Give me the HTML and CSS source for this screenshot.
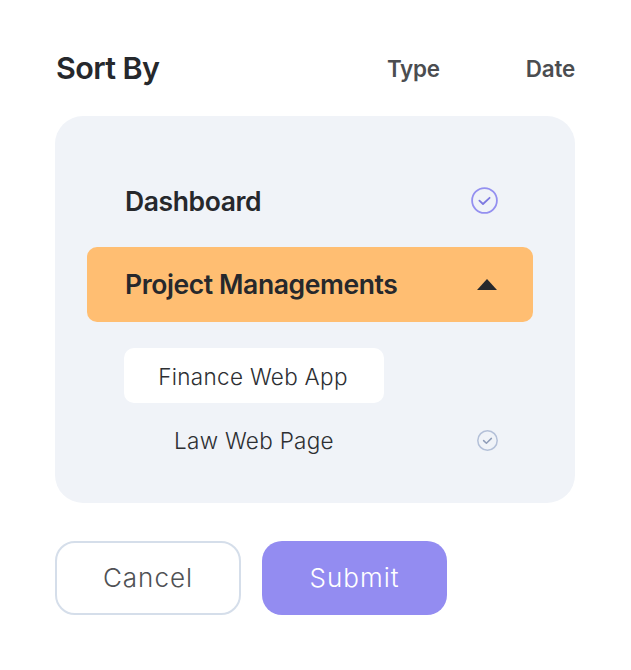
FILE: index.html
```html
<!DOCTYPE html>
<html lang="en">
<head>
    <meta charset="UTF-8">
    <meta name="viewport" content="width=device-width, initial-scale=1.0">
    <link rel="stylesheet" href="styles.css">
    <title>Sort By</title>
</head>
<body>
<div class="sort-card">
    <div class="sort-head">
        <h1 class="sort-title">Sort By</h1>
        <span class="sort-tab sort-tab_type">Type</span>
        <span class="sort-tab">Date</span>
    </div>

    <div class="panel">
        <div class="row row_first">
            <span class="row-label">Dashboard</span>
            <svg class="check" width="27" height="27" viewBox="0 0 27 27" fill="none">
                <circle cx="13.5" cy="13.5" r="12.4" stroke="#9490f0" stroke-width="1.8"/>
                <path d="M8.4 13.6l3.6 3.4 6.6-6.2" stroke="#7d79e0" stroke-width="1.8" stroke-linecap="round" stroke-linejoin="round"/>
            </svg>
        </div>

        <div class="row row_active">
            <span class="row-label">Project Managements</span>
            <span class="arrow-up"></span>
        </div>

        <div class="sub-item sub-item_selected">Finance Web App</div>

        <div class="sub-row">
            <span class="sub-item">Law Web Page</span>
            <svg class="check" width="21" height="21" viewBox="0 0 21 21" fill="none">
                <circle cx="10.5" cy="10.5" r="9.7" stroke="#b4c0d8" stroke-width="1.5"/>
                <path d="M6.6 10.6l2.8 2.6 5-4.8" stroke="#8f9db8" stroke-width="1.5" stroke-linecap="round" stroke-linejoin="round"/>
            </svg>
        </div>
    </div>

    <div class="actions">
        <button class="btn btn_cancel">Cancel</button>
        <button class="btn btn_submit">Submit</button>
    </div>
</div>
</body>
</html>
```

FILE: styles.css
```css
body, html {
    margin: 0;
    padding: 0;
    background-color: #fff;
}

body {
    font-family: "Inter", "Liberation Sans", sans-serif;
    color: #26282c;
}

.sort-card {
    width: 520px;
    padding: 48px 0 0 55px;
}

.sort-head {
    display: flex;
    align-items: center;
    height: 40px;
}

.sort-title {
    margin: 0 0 0 1px;
    font-size: 30.5px;
    line-height: 40px;
    font-weight: 600;
    letter-spacing: -0.6px;
    flex: 1;
}

.sort-tab {
    font-size: 22.4px;
    font-weight: 600;
    letter-spacing: -0.2px;
    color: #4b4d50;
}

.sort-tab_type {
    margin-right: 86px;
}

.panel {
    height: 387px;
    margin-top: 28px;
    padding: 0 42px 0 32px;
    background-color: #f0f3f8;
    border-radius: 28px;
    box-sizing: border-box;
}

.row {
    display: flex;
    align-items: center;
    justify-content: space-between;
    padding-left: 38px;
    box-sizing: border-box;
}

.row_first {
    height: 131px;
    padding-top: 38px;
    padding-right: 35px;
}

.row_active {
    height: 75px;
    background-color: #ffbe72;
    border-radius: 10px;
    padding-right: 36px;
}

.row_active .row-label {
    margin-bottom: 2px;
}

.row-label {
    font-size: 26.5px;
    font-weight: 600;
    letter-spacing: -0.4px;
}

.check {
    display: block;
}

.arrow-up {
    width: 0;
    height: 0;
    border-left: 10.5px solid transparent;
    border-right: 10.5px solid transparent;
    border-bottom: 11px solid #26282c;
}

.sub-item {
    font-size: 22.5px;
    font-weight: 300;
    letter-spacing: 0.3px;
    color: #2d2f33;
}

.sub-item_selected {
    display: flex;
    align-items: center;
    justify-content: center;
    width: 260px;
    height: 55px;
    margin: 26px 0 0 37px;
    padding-top: 2px;
    padding-right: 2px;
    background-color: #fff;
    border-radius: 10px;
    box-sizing: border-box;
}

.sub-row {
    display: flex;
    align-items: center;
    justify-content: space-between;
    height: 36px;
    margin-top: 19px;
    padding: 0 35px 0 87px;
}

.actions {
    display: flex;
    gap: 21px;
    margin-top: 38px;
}

.btn {
    width: 186px;
    height: 74px;
    padding-bottom: 3px;
    border-radius: 20px;
    font-family: inherit;
    font-size: 26px;
    font-weight: 300;
    letter-spacing: 1px;
    box-sizing: border-box;
}

.btn_cancel {
    background-color: #fff;
    border: 2px solid #d5deea;
    color: #4f5154;
}

.btn_submit {
    width: 185px;
    background-color: #938cf1;
    border: none;
    color: #fff;
}
```
